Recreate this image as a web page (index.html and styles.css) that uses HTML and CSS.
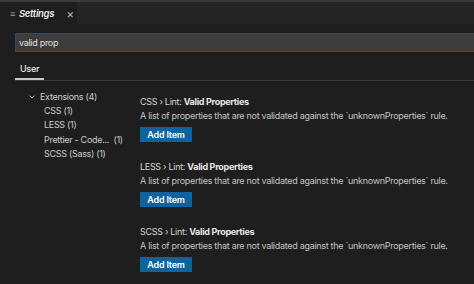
FILE: index.html
```html
<!DOCTYPE html>
<html lang="en">
<head>
    <meta charset="UTF-8">
    <title>Settings</title>
    <link rel="stylesheet" href="styles.css">
</head>
<body>

<div class="tabbar">
    <div class="tab">
        <span class="tab-icon">&#8801;</span>
        <span class="tab-title">Settings</span>
        <span class="tab-close">&#215;</span>
    </div>
</div>

<div class="editor">
    <div class="search">valid prop</div>

    <div class="scopes">
        <span class="scope active">User</span>
    </div>

    <div class="settings-body">
        <!-- table of contents -->
        <div class="toc">
            <div class="toc-group">
                <svg class="chevron" width="8" height="8" viewBox="0 0 8 8"><path d="M1.5 2.5 L4 5 L6.5 2.5" fill="none" stroke="#9a9a9a" stroke-width="1"/></svg>
                Extensions (4)
            </div>
            <div class="toc-item">CSS (1)</div>
            <div class="toc-item">LESS (1)</div>
            <div class="toc-item">Prettier - Code... &nbsp;(1)</div>
            <div class="toc-item">SCSS (Sass) (1)</div>
        </div>

        <!-- settings list -->
        <div class="list">
            <div class="setting">
                <div class="setting-title">CSS &#8250; Lint: <b>Valid Properties</b></div>
                <div class="setting-desc">A list of properties that are not validated against the `unknownProperties` rule.</div>
                <button class="add-btn">Add Item</button>
            </div>
            <div class="setting">
                <div class="setting-title">LESS &#8250; Lint: <b>Valid Properties</b></div>
                <div class="setting-desc">A list of properties that are not validated against the `unknownProperties` rule.</div>
                <button class="add-btn">Add Item</button>
            </div>
            <div class="setting">
                <div class="setting-title">SCSS &#8250; Lint: <b>Valid Properties</b></div>
                <div class="setting-desc">A list of properties that are not validated against the `unknownProperties` rule.</div>
                <button class="add-btn">Add Item</button>
            </div>
        </div>
    </div>
</div>

</body>
</html>
```

FILE: styles.css
```css
body {
    margin: 0;
    padding: 0;
    width: 474px;
    height: 284px;
    overflow: hidden;
    background-color: #1e1e1e;
    color: #cccccc;
    font-family: Inter, "Noto Sans", sans-serif;
    font-size: 9px;
    letter-spacing: -0.3px;
}

.tabbar {
    height: 22px;
    border-top: 2px solid #3a3a3a;
    background-color: #252526;
    display: flex;
}

.tab {
    width: 77px;
    background-color: #1e1e1e;
    display: flex;
    align-items: center;
    padding-left: 10px;
    box-sizing: border-box;
}

.tab-icon {
    font-size: 9px;
    color: #a0a0a0;
    margin-right: 4px;
}

.tab-title {
    font-style: italic;
    font-weight: 600;
    font-size: 9.5px;
    color: #e8e8e8;
}

.tab-close {
    margin-left: 12px;
    color: #b0b0b0;
    font-size: 12px;
}

.editor {
    padding-top: 9px;
}

.search {
    margin-left: 15px;
    height: 17px;
    line-height: 17px;
    padding-left: 3px;
    background-color: #3c3c3c;
    border: 1px solid #2e4d66;
    border-right: none;
    color: #e0e0e0;
}

.scopes {
    margin: 10px 0 0 15px;
    border-bottom: 1px solid #3a3a3a;
    height: 18px;
}

.scope {
    display: inline-block;
    padding: 0 5px;
    height: 16px;
    line-height: 14px;
    color: #e8e8e8;
    font-weight: 500;
}

.scope.active {
    border-bottom: 2px solid #c8c8c8;
}

.settings-body {
    display: flex;
    padding-top: 9px;
}

.toc {
    width: 140px;
    flex-shrink: 0;
}

.toc-group {
    padding-left: 28px;
    height: 14px;
    line-height: 14px;
    display: flex;
    align-items: center;
    gap: 4px;
}

.toc-item {
    padding-left: 44px;
    height: 14.3px;
    line-height: 14px;
}

.list {
    flex: 1;
    padding-top: 5px;
}

.setting {
    height: 65px;
}

.setting-title {
    line-height: 14px;
    color: #d4d4d4;
}

.setting-title b {
    font-weight: 700;
    color: #e8e8e8;
}

.setting-desc {
    line-height: 14px;
    color: #c4c4c4;
    white-space: nowrap;
}

.add-btn {
    margin-top: 4px;
    width: 52px;
    height: 15px;
    padding: 0;
    border: none;
    background-color: #0e639c;
    color: #ffffff;
    font-family: inherit;
    font-size: 9px;
    font-weight: 600;
    letter-spacing: -0.2px;
}
```
